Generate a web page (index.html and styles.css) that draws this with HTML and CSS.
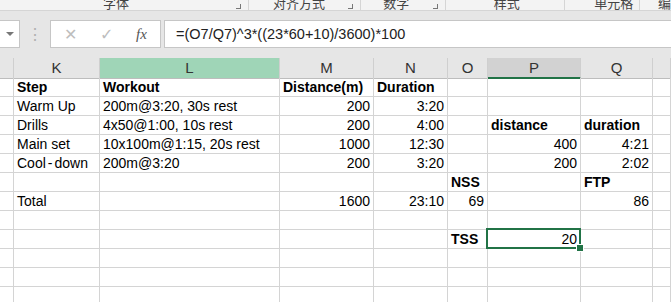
FILE: index.html
```html
<!DOCTYPE html>
<html lang="en">
<head>
    <meta charset="UTF-8">
    <title>Swim TSS</title>
    <link rel="stylesheet" href="styles.css">
</head>
<body>
    <div class="ribbon">
        <div class="group g1"><span>字体</span><i class="launcher"></i></div>
        <div class="group g2"><span>对齐方式</span><i class="launcher"></i></div>
        <div class="group g3"><span>数字</span><i class="launcher"></i></div>
        <div class="group g4"><span>样式</span></div>
        <div class="group g5"><span>单元格</span></div>
        <div class="group g6"><span>编</span></div>
    </div>

    <div class="formula-bar">
        <div class="name-box"><span class="caret"></span></div>
        <div class="grip">⋮</div>
        <div class="fx-box">
            <span class="fx-btn">✕</span>
            <span class="fx-btn">✓</span>
            <span class="fx-label">fx</span>
        </div>
        <div class="formula">=(O7/Q7)^3*((23*60+10)/3600)*100</div>
    </div>

    <div class="sheet">
        <div class="row head">
            <div></div><div>K</div><div class="col-hl">L</div><div>M</div><div>N</div><div>O</div><div class="col-sel">P</div><div>Q</div><div></div>
        </div>
        <div class="row">
            <div></div><div class="b">Step</div><div class="b">Workout</div><div class="b">Distance(m)</div><div class="b">Duration</div><div></div><div></div><div></div><div></div>
        </div>
        <div class="row">
            <div></div><div>Warm Up</div><div>200m@3:20, 30s rest</div><div class="n">200</div><div class="n">3:20</div><div></div><div></div><div></div><div></div>
        </div>
        <div class="row">
            <div></div><div>Drills</div><div>4x50@1:00, 10s rest</div><div class="n">200</div><div class="n">4:00</div><div></div><div class="b">distance</div><div class="b">duration</div><div></div>
        </div>
        <div class="row">
            <div></div><div>Main set</div><div>10x100m@1:15, 20s rest</div><div class="n">1000</div><div class="n">12:30</div><div></div><div class="n">400</div><div class="n">4:21</div><div></div>
        </div>
        <div class="row">
            <div></div><div>Cool<span class="dash">-</span>down</div><div>200m@3:20</div><div class="n">200</div><div class="n">3:20</div><div></div><div class="n">200</div><div class="n">2:02</div><div></div>
        </div>
        <div class="row">
            <div></div><div></div><div></div><div></div><div></div><div class="b">NSS</div><div></div><div class="b">FTP</div><div></div>
        </div>
        <div class="row">
            <div></div><div>Total</div><div></div><div class="n">1600</div><div class="n">23:10</div><div class="n">69</div><div></div><div class="n">86</div><div></div>
        </div>
        <div class="row">
            <div></div><div></div><div></div><div></div><div></div><div></div><div></div><div></div><div></div>
        </div>
        <div class="row">
            <div></div><div></div><div></div><div></div><div></div><div class="b">TSS</div><div class="n active">20</div><div></div><div></div>
        </div>
        <div class="row">
            <div></div><div></div><div></div><div></div><div></div><div></div><div></div><div></div><div></div>
        </div>
        <div class="row">
            <div></div><div></div><div></div><div></div><div></div><div></div><div></div><div></div><div></div>
        </div>
        <div class="row">
            <div></div><div></div><div></div><div></div><div></div><div></div><div></div><div></div><div></div>
        </div>
    </div>
</body>
</html>
```

FILE: styles.css
```css
* {
    margin: 0;
    padding: 0;
    box-sizing: border-box;
}

body {
    width: 671px;
    height: 302px;
    overflow: hidden;
    background: #ffffff;
    font-family: 'Liberation Sans', Arial, 'Noto Sans CJK SC', sans-serif;
}

/* ribbon group labels, mostly scrolled out of view */
.ribbon {
    height: 11px;
    background: #f3f3f3;
    border-bottom: 1px solid #d5d5d5;
    display: flex;
    overflow: hidden;
}

.group {
    display: flex;
    align-items: flex-end;
    height: 10px;
    border-right: 1px solid #d5d5d5;
    color: #444;
    font-size: 13px;
    line-height: 12px;
    position: relative;
}

.group span {
    margin-bottom: 1px;
    font-family: 'Noto Sans CJK SC', sans-serif;
}

.launcher {
    position: absolute;
    right: 7px;
    bottom: 1px;
    width: 5px;
    height: 5px;
    border-right: 1px solid #777;
    border-bottom: 1px solid #777;
}

.g1 { width: 250px; padding-left: 103px; }
.g2 { width: 113px; padding-left: 24px; }
.g3 { width: 85px; padding-left: 22px; }
.g4 { width: 120px; padding-left: 48px; }
.g5 { width: 75px; padding-left: 29px; }
.g6 { flex: 1; border-right: none; padding-left: 18px; }

/* formula bar */
.formula-bar {
    height: 47px;
    background: #e6e6e6;
    display: flex;
    align-items: center;
    padding-bottom: 1px;
}

.name-box {
    width: 20px;
    height: 28px;
    background: #fff;
    border: 1px solid #c6c6c6;
    border-left: none;
    display: flex;
    align-items: center;
    justify-content: flex-end;
    padding-right: 5px;
}

.caret {
    width: 0;
    height: 0;
    border-left: 4px solid transparent;
    border-right: 4px solid transparent;
    border-top: 4px solid #777;
}

.grip {
    width: 30px;
    text-align: center;
    color: #b0b0b0;
    font-size: 16px;
}

.fx-box {
    width: 111px;
    height: 28px;
    background: #fff;
    border: 1px solid #c6c6c6;
    display: flex;
    align-items: center;
    padding-left: 13px;
}

.fx-btn {
    width: 36px;
    color: #bdbdbd;
    font-size: 16px;
    font-family: 'DejaVu Sans', sans-serif;
}

.fx-label {
    font-family: 'Liberation Serif', serif;
    font-style: italic;
    font-size: 15px;
    color: #555;
}

.formula {
    flex: 1;
    height: 28px;
    margin-left: 3px;
    background: #fff;
    border: 1px solid #c6c6c6;
    border-right: none;
    padding-left: 11px;
    font-size: 14.5px;
    line-height: 26px;
    color: #222;
}

/* grid */
.row {
    display: grid;
    grid-template-columns: 14px 86px 180px 94px 74px 40px 93px 72px 1fr;
    height: 19px;
}

.row > div {
    border-right: 1px solid #d4d4d4;
    border-bottom: 1px solid #d4d4d4;
    font-size: 14px;
    line-height: 18px;
    padding: 0 3px;
    white-space: nowrap;
    color: #000;
    position: relative;
}

.row.head {
    height: 20px;
    background: #e6e6e6;
}

.row.head > div {
    border-right-color: #cfcfcf;
    border-bottom-color: #bdbdbd;
    text-align: center;
    color: #333;
    font-size: 15px;
    line-height: 19px;
}

.row.head .col-hl {
    background: #9fd5b7;
}

.row.head .col-sel {
    background: #d2d2d2;
    border-bottom: 2px solid #217346;
}

.b {
    font-weight: bold;
}

.n {
    text-align: right;
}

.dash {
    padding: 0 2px;
}

.row > .active::after {
    content: "";
    position: absolute;
    left: -2px;
    top: -2px;
    right: -1px;
    bottom: -1px;
    border: 2px solid #217346;
}

.row > .active::before {
    content: "";
    position: absolute;
    right: -4px;
    bottom: -4px;
    width: 6px;
    height: 6px;
    background: #217346;
    border: 1px solid #fff;
    z-index: 1;
}
```
